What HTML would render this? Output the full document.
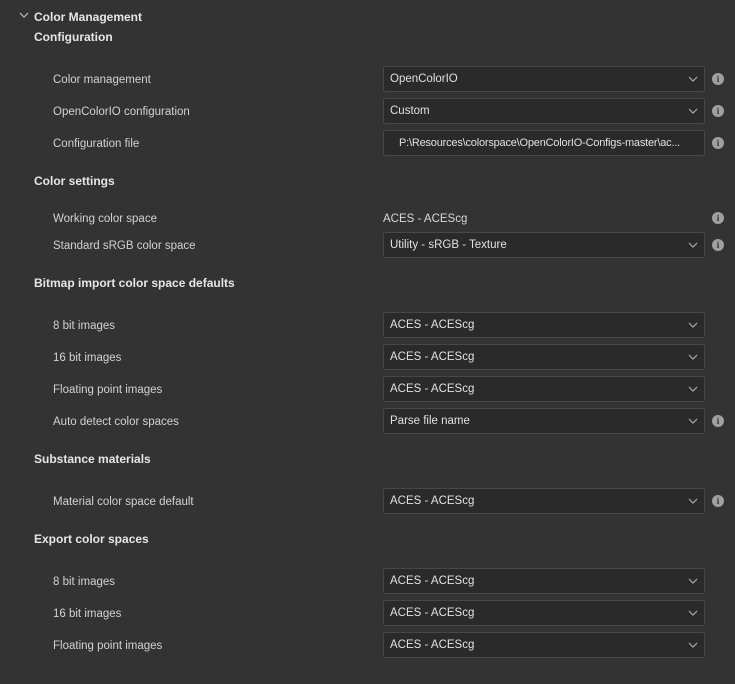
<!DOCTYPE html><html><head><style>
body{margin:0;width:735px;height:684px;background:#333;font-family:"Liberation Sans",sans-serif;font-size:11.5px;color:#ddd;position:relative;overflow:hidden}
.h{position:absolute;left:34px;font-weight:bold;color:#e6e6e6;font-size:12px}
.l{position:absolute;left:53px;color:#d2d2d2;margin-top:2px}
.b{position:absolute;left:383px;width:320px;height:24px;background:#2a2a2a;border:1px solid #474747;border-radius:2px;box-sizing:content-box}
.b span{position:absolute;left:6px;top:6px;color:#e0e0e0;white-space:nowrap}
.b svg{position:absolute;right:6px;top:9px}
.i{position:absolute;left:712px;width:12px;height:12px;border-radius:50%;background:#a0a0a0;color:#333;font:bold 9px "Liberation Serif",serif;text-align:center;line-height:12px;margin-top:1px}
</style></head><body>
<svg style="position:absolute;left:19px;top:12px" width="10" height="7"><path d="M1 1 L5 5 L9 1" stroke="#bbb" fill="none" stroke-width="1.2"/></svg>
<div class="h" style="top:10px">Color Management</div>
<div class="h" style="top:30px">Configuration</div>
<div class="h" style="top:174px">Color settings</div>
<div class="h" style="top:276px">Bitmap import color space defaults</div>
<div class="h" style="top:452px">Substance materials</div>
<div class="h" style="top:532px">Export color spaces</div>

<div class="l" style="top:72px">Color management</div>
<div class="b" style="top:66px"><span>OpenColorIO</span><svg width="10" height="7"><path d="M1 1L5 5L9 1" stroke="#aaa" fill="none" stroke-width="1.2"/></svg></div><div class="i" style="top:72px">i</div>
<div class="l" style="top:104px">OpenColorIO configuration</div>
<div class="b" style="top:98px"><span>Custom</span><svg width="10" height="7"><path d="M1 1L5 5L9 1" stroke="#aaa" fill="none" stroke-width="1.2"/></svg></div><div class="i" style="top:104px">i</div>
<div class="l" style="top:136px">Configuration file</div>
<div class="b" style="top:130px"><span style="left:15px;font-size:11px;letter-spacing:-0.2px">P:\Resources\colorspace\OpenColorIO-Configs-master\ac...</span></div><div class="i" style="top:136px">i</div>

<div class="l" style="top:211px">Working color space</div>
<div style="position:absolute;left:383px;top:213px;color:#d8d8d8">ACES - ACEScg</div><div class="i" style="top:211px">i</div>
<div class="l" style="top:238px">Standard sRGB color space</div>
<div class="b" style="top:232px"><span>Utility - sRGB - Texture</span><svg width="10" height="7"><path d="M1 1L5 5L9 1" stroke="#aaa" fill="none" stroke-width="1.2"/></svg></div><div class="i" style="top:238px">i</div>

<div class="l" style="top:318px">8 bit images</div>
<div class="b" style="top:312px"><span>ACES - ACEScg</span><svg width="10" height="7"><path d="M1 1L5 5L9 1" stroke="#aaa" fill="none" stroke-width="1.2"/></svg></div>
<div class="l" style="top:350px">16 bit images</div>
<div class="b" style="top:344px"><span>ACES - ACEScg</span><svg width="10" height="7"><path d="M1 1L5 5L9 1" stroke="#aaa" fill="none" stroke-width="1.2"/></svg></div>
<div class="l" style="top:382px">Floating point images</div>
<div class="b" style="top:376px"><span>ACES - ACEScg</span><svg width="10" height="7"><path d="M1 1L5 5L9 1" stroke="#aaa" fill="none" stroke-width="1.2"/></svg></div>
<div class="l" style="top:414px">Auto detect color spaces</div>
<div class="b" style="top:408px"><span>Parse file name</span><svg width="10" height="7"><path d="M1 1L5 5L9 1" stroke="#aaa" fill="none" stroke-width="1.2"/></svg></div><div class="i" style="top:414px">i</div>

<div class="l" style="top:494px">Material color space default</div>
<div class="b" style="top:488px"><span>ACES - ACEScg</span><svg width="10" height="7"><path d="M1 1L5 5L9 1" stroke="#aaa" fill="none" stroke-width="1.2"/></svg></div><div class="i" style="top:494px">i</div>

<div class="l" style="top:574px">8 bit images</div>
<div class="b" style="top:568px"><span>ACES - ACEScg</span><svg width="10" height="7"><path d="M1 1L5 5L9 1" stroke="#aaa" fill="none" stroke-width="1.2"/></svg></div>
<div class="l" style="top:606px">16 bit images</div>
<div class="b" style="top:600px"><span>ACES - ACEScg</span><svg width="10" height="7"><path d="M1 1L5 5L9 1" stroke="#aaa" fill="none" stroke-width="1.2"/></svg></div>
<div class="l" style="top:638px">Floating point images</div>
<div class="b" style="top:632px"><span>ACES - ACEScg</span><svg width="10" height="7"><path d="M1 1L5 5L9 1" stroke="#aaa" fill="none" stroke-width="1.2"/></svg></div>
</body></html>
